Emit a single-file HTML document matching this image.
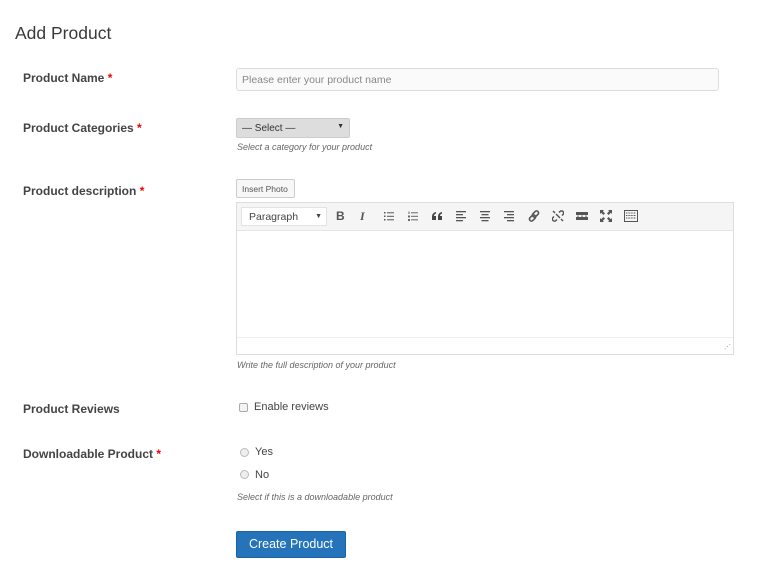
<!DOCTYPE html>
<html><head><meta charset="utf-8"><style>
*{margin:0;padding:0;box-sizing:border-box}
body{width:768px;height:580px;background:#fff;font-family:"Liberation Sans",sans-serif;color:#444;position:relative;overflow:hidden}
.a{position:absolute}
.lbl{position:absolute;left:23px;font-size:12px;font-weight:bold;color:#444}
.lbl span{color:#e00}
.hint{position:absolute;left:237px;font-size:9px;font-style:italic;color:#666}
.tb{position:absolute;top:207px;font-size:12px;color:#555;line-height:18px}
svg.i{position:absolute;top:210px;width:12px;height:12px}
</style></head><body>
<div class="a" style="left:15px;top:23px;font-size:17.5px;color:#3a3a3a">Add Product</div>

<div class="lbl" style="top:71px">Product Name <span>*</span></div>
<div class="a" style="left:236px;top:68px;width:483px;height:23px;border:1px solid #ddd;border-radius:3px;background:#fafafa;font-size:10.5px;color:#888;padding:5px 0 0 5px">Please enter your product name</div>

<div class="lbl" style="top:121px">Product Categories <span>*</span></div>
<div class="a" style="left:236px;top:118px;width:114px;height:20px;background:#ddd;border:1px solid #ccc;border-radius:2px;font-size:10px;color:#333;padding:4px 0 0 5px">— Select —<span style="position:absolute;right:5px;top:4px;font-size:7px">▼</span></div>
<div class="hint" style="top:142px">Select a category for your product</div>

<div class="lbl" style="top:184px">Product description <span>*</span></div>
<div class="a" style="left:236px;top:179px;width:59px;height:19px;border:1px solid #ccc;border-radius:2px;background:#f7f7f7;font-size:8.5px;color:#555;padding:4px 0 0 5px">Insert Photo</div>

<div class="a" style="left:236px;top:202px;width:498px;height:153px;border:1px solid #ddd;background:#fff"></div>
<div class="a" style="left:237px;top:203px;width:496px;height:28px;background:#f5f5f5;border-bottom:1px solid #e5e5e5"></div>
<div class="a" style="left:241px;top:207px;width:86px;height:19px;background:#fff;border:1px solid #e3e3e3;font-size:10.5px;color:#444;padding:3px 0 0 7px">Paragraph<span style="position:absolute;right:4px;top:5px;font-size:7px">▼</span></div>
<div class="tb" style="left:336px;font-weight:bold">B</div>
<div class="tb" style="left:360px;font-style:italic;font-weight:bold;font-family:'Liberation Serif',serif">I</div>
<svg class="i" style="left:383px" viewBox="0 0 12 12" fill="#555"><rect x="1" y="2" width="1.5" height="1.5"/><rect x="1" y="5.5" width="1.5" height="1.5"/><rect x="1" y="9" width="1.5" height="1.5"/><rect x="4" y="2.3" width="7" height="1"/><rect x="4" y="5.8" width="7" height="1"/><rect x="4" y="9.3" width="7" height="1"/></svg>
<svg class="i" style="left:407px" viewBox="0 0 12 12" fill="#666"><rect x="1.5" y="1.5" width="1" height="2.5"/><rect x="1" y="5.5" width="2" height="2"/><rect x="1" y="9" width="2" height="2"/><rect x="4" y="2.3" width="7" height="1"/><rect x="4" y="5.8" width="7" height="1"/><rect x="4" y="9.3" width="7" height="1"/></svg>
<svg class="i" style="left:431px" viewBox="0 0 12 12" fill="#444"><path d="M1 10V7C1 4 2.5 2.5 5 2v1.5C3.5 4 3 5 3 6h2v4zM7 10V7c0-3 1.5-4.5 4-5v1.5C9.5 4 9 5 9 6h2v4z"/></svg>
<svg class="i" style="left:455px" viewBox="0 0 12 12" fill="#555"><rect x="1" y="1" width="10" height="1.3"/><rect x="1" y="4" width="7" height="1.3"/><rect x="1" y="7" width="10" height="1.3"/><rect x="1" y="10" width="7" height="1.3"/></svg>
<svg class="i" style="left:479px" viewBox="0 0 12 12" fill="#555"><rect x="1" y="1" width="10" height="1.3"/><rect x="2.5" y="4" width="7" height="1.3"/><rect x="1" y="7" width="10" height="1.3"/><rect x="2.5" y="10" width="7" height="1.3"/></svg>
<svg class="i" style="left:503px" viewBox="0 0 12 12" fill="#555"><rect x="1" y="1" width="10" height="1.3"/><rect x="4" y="4" width="7" height="1.3"/><rect x="1" y="7" width="10" height="1.3"/><rect x="4" y="10" width="7" height="1.3"/></svg>
<svg class="i" style="left:528px" viewBox="0 0 12 12" fill="none" stroke="#555" stroke-width="1.6"><rect x="5.5" y="0.5" width="4" height="7" rx="2" transform="rotate(45 7.5 4)"/><rect x="2.5" y="4.5" width="4" height="7" rx="2" transform="rotate(45 4.5 8)"/></svg>
<svg class="i" style="left:552px" viewBox="0 0 12 12" fill="none" stroke="#555" stroke-width="1.5"><path d="M7 2.5l1-1a2 2 0 0 1 3 3l-1 1M5 9.5l-1 1a2 2 0 0 1-3-3l1-1M4 4l4 4M1 1l2 2M9 9l2 2"/></svg>
<svg class="i" style="left:576px" viewBox="0 0 12 12" fill="#555"><rect x="0" y="2" width="12" height="3"/><rect x="0" y="7" width="12" height="3"/><rect x="1" y="5.7" width="2" height="0.8"/><rect x="5" y="5.7" width="2" height="0.8"/><rect x="9" y="5.7" width="2" height="0.8"/></svg>
<svg class="i" style="left:600px" viewBox="0 0 12 12" fill="#555"><path d="M0 0h4L2.8 1.2 5 3.4 3.4 5 1.2 2.8 0 4zM12 0v4l-1.2-1.2L8.6 5 7 3.4 9.2 1.2 8 0zM0 12V8l1.2 1.2L3.4 7 5 8.6 2.8 10.8 4 12zM12 12H8l1.2-1.2L7 8.6 8.6 7l2.2 2.2L12 8z"/></svg>
<svg class="i" style="left:624px;width:14px" viewBox="0 0 14 12" fill="none" stroke="#555" stroke-width="1"><rect x="0.5" y="0.5" width="13" height="11"/><path d="M2 3h10M2 5.5h10M2 8h10" stroke-dasharray="1 0.6"/></svg>

<div class="a" style="left:237px;top:337px;width:496px;height:1px;background:#eee"></div>
<div class="a" style="left:724px;top:343px;font-size:7px;color:#999">⋰</div>
<div class="hint" style="top:360px">Write the full description of your product</div>

<div class="lbl" style="top:402px">Product Reviews</div>
<div class="a" style="left:239px;top:403px;width:9px;height:9px;border:1px solid #aaa;border-radius:2px;background:#f3f3f3"></div>
<div class="a" style="left:254px;top:401px;font-size:11px;color:#444">Enable reviews</div>

<div class="lbl" style="top:447px">Downloadable Product <span>*</span></div>
<div class="a" style="left:240px;top:448px;width:9px;height:9px;border:1px solid #bbb;border-radius:50%;background:#eee"></div>
<div class="a" style="left:255px;top:446px;font-size:11px;color:#444">Yes</div>
<div class="a" style="left:240px;top:470px;width:9px;height:9px;border:1px solid #bbb;border-radius:50%;background:#eee"></div>
<div class="a" style="left:255px;top:469px;font-size:11px;color:#444">No</div>
<div class="hint" style="top:492px">Select if this is a downloadable product</div>

<div class="a" style="left:236px;top:531px;width:110px;height:27px;background:#2473bb;border:1px solid #1d62a0;border-radius:2px;color:#fff;font-size:12.5px;text-align:center;line-height:25px">Create Product</div>
</body></html>
